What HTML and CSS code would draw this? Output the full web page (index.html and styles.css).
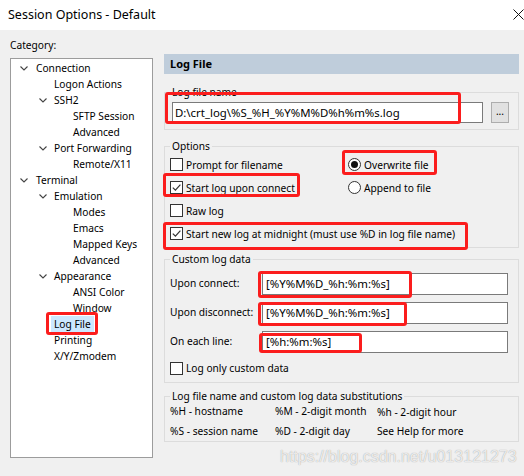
FILE: index.html
```html
<!DOCTYPE html>
<html>
<head>
<meta charset="utf-8">
<link rel="stylesheet" href="styles.css">
</head>
<body>
<div class="titlebar">
  <span class="title">Session Options - Default</span>
  <span class="close"><svg width="11" height="11" viewBox="0 0 11 11"><path d="M0.5 0.5 L10.5 10.5 M10.5 0.5 L0.5 10.5" stroke="#111" stroke-width="1" fill="none"/></svg></span>
</div>
<div class="main">
  <div class="left">
    <div class="cat-label">Category:</div>
    <div class="tree">
      <div class="node l0"><span class="chev"><svg width="8" height="5" viewBox="0 0 8 5"><path d="M0.5 0.5 L4 4 L7.5 0.5" stroke="#444" stroke-width="1.1" fill="none"/></svg></span>Connection</div>
      <div class="node l1">Logon Actions</div>
      <div class="node l1"><span class="chev"><svg width="8" height="5" viewBox="0 0 8 5"><path d="M0.5 0.5 L4 4 L7.5 0.5" stroke="#444" stroke-width="1.1" fill="none"/></svg></span>SSH2</div>
      <div class="node l2">SFTP Session</div>
      <div class="node l2">Advanced</div>
      <div class="node l1"><span class="chev"><svg width="8" height="5" viewBox="0 0 8 5"><path d="M0.5 0.5 L4 4 L7.5 0.5" stroke="#444" stroke-width="1.1" fill="none"/></svg></span>Port Forwarding</div>
      <div class="node l2">Remote/X11</div>
      <div class="node l0"><span class="chev"><svg width="8" height="5" viewBox="0 0 8 5"><path d="M0.5 0.5 L4 4 L7.5 0.5" stroke="#444" stroke-width="1.1" fill="none"/></svg></span>Terminal</div>
      <div class="node l1"><span class="chev"><svg width="8" height="5" viewBox="0 0 8 5"><path d="M0.5 0.5 L4 4 L7.5 0.5" stroke="#444" stroke-width="1.1" fill="none"/></svg></span>Emulation</div>
      <div class="node l2">Modes</div>
      <div class="node l2">Emacs</div>
      <div class="node l2">Mapped Keys</div>
      <div class="node l2">Advanced</div>
      <div class="node l1"><span class="chev"><svg width="8" height="5" viewBox="0 0 8 5"><path d="M0.5 0.5 L4 4 L7.5 0.5" stroke="#444" stroke-width="1.1" fill="none"/></svg></span>Appearance</div>
      <div class="node l2">ANSI Color</div>
      <div class="node l2">Window</div>
      <div class="node l1"><span class="selected">Log File</span></div>
      <div class="node l1">Printing</div>
      <div class="node l1">X/Y/Zmodem</div>
    </div>
  </div>
  <div class="right">
    <div class="header">Log File</div>

    <fieldset class="group g-name">
      <legend>Log file name</legend>
      <div class="name-row">
        <div class="input name-input">D:\crt_log\%S_%H_%Y%M%D%h%m%s.log</div>
        <div class="btn">...</div>
      </div>
    </fieldset>

    <fieldset class="group g-options">
      <legend>Options</legend>
      <div class="opt-grid">
        <label class="item"><span class="cb"></span>Prompt for filename</label>
        <label class="item"><span class="radio on"></span>Overwrite file</label>
        <label class="item"><span class="cb on"><svg width="11" height="11" viewBox="0 0 11 11"><path d="M1.8 5.6 L4.4 8.2 L9.4 2.6" stroke="#333" stroke-width="1.2" fill="none"/></svg></span>Start log upon connect</label>
        <label class="item"><span class="radio"></span>Append to file</label>
        <label class="item"><span class="cb"></span>Raw log</label>
        <span></span>
        <label class="item wide"><span class="cb on"><svg width="11" height="11" viewBox="0 0 11 11"><path d="M1.8 5.6 L4.4 8.2 L9.4 2.6" stroke="#333" stroke-width="1.2" fill="none"/></svg></span>Start new log at midnight (must use %D in log file name)</label>
      </div>
    </fieldset>

    <fieldset class="group g-custom">
      <legend>Custom log data</legend>
      <div class="custom-grid">
        <span class="lbl">Upon connect:</span>
        <div class="input">[%Y%M%D_%h:%m:%s]</div>
        <span class="lbl">Upon disconnect:</span>
        <div class="input">[%Y%M%D_%h:%m:%s]</div>
        <span class="lbl">On each line:</span>
        <div class="input">[%h:%m:%s]</div>
      </div>
      <label class="item only-custom"><span class="cb"></span>Log only custom data</label>
    </fieldset>

    <fieldset class="group g-subs">
      <legend>Log file name and custom log data substitutions</legend>
      <div class="subs-grid">
        <span>%H - hostname</span>
        <span>%M - 2-digit month</span>
        <span class="low">%h - 2-digit hour</span>
        <span>%S - session name</span>
        <span>%D - 2-digit day</span>
        <span>See Help for more</span>
      </div>
    </fieldset>
  </div>
</div>

<div class="marks">
  <div class="mark m-name"></div>
  <div class="mark m-over"></div>
  <div class="mark m-start"></div>
  <div class="mark m-mid"></div>
  <div class="mark m-conn"></div>
  <div class="mark m-disc"></div>
  <div class="mark m-line"></div>
  <div class="mark m-tree"></div>
</div>
<div class="watermark">https://blog.csdn.net/u013121273</div>
</body>
</html>
```

FILE: styles.css
```css
* { box-sizing: border-box; }
html, body { margin: 0; padding: 0; }
body {
  width: 524px;
  height: 476px;
  overflow: hidden;
  background: #f0f0f0;
  font-family: "Noto Sans", "Open Sans", sans-serif;
  font-size: 10.2px;
  color: #000;
  position: relative;
}

.titlebar {
  height: 30px;
  background: #fff;
  display: flex;
  align-items: center;
  justify-content: space-between;
  padding-left: 8px;
}
.title { font-size: 12.5px; line-height: 16px; margin-top: -1px; }
.close { display: flex; align-items: center; margin-right: 0; margin-top: -2px; }

.main { display: flex; }
.left { width: 164px; padding-left: 10px; }
.cat-label { height: 16px; line-height: 16px; margin-top: 7px; }
.tree {
  margin-top: 5px;
  width: 143px;
  height: 400px;
  background: #fff;
  border: 1px solid #9c9c9c;
  padding-top: 1px;
}
.node { height: 16px; line-height: 16px; white-space: nowrap; }
.node.l0 { padding-left: 25px; }
.node.l1 { padding-left: 43px; }
.node.l2 { padding-left: 62px; }
.chev {
  display: inline-flex;
  align-items: center;
  width: 16px;
  height: 16px;
  margin-left: -16px;
  vertical-align: top;
  padding-top: 1px;
}
.l1 .chev { margin-left: -15px; width: 15px; }
.selected {
  display: inline-block;
  background: #cce8ff;
  margin-left: -3px;
  padding: 0 3px;
  height: 17px;
}

.right { width: 355px; padding-top: 24px; }
.header {
  height: 20px;
  line-height: 20px;
  background: #bfcddb;
  padding-left: 6px;
  font-weight: bold;
  font-size: 11px;
}

.group {
  margin: 0;
  border: 1px solid #dcdcdc;
  padding: 0 10px 0 5px;
  min-width: 0;
}
.group legend {
  padding: 0 2px;
  line-height: 14px;
  height: 14px;
}
.g-name { margin-top: 11px; }
.g-options { margin-top: 9px; }
.g-custom { margin-top: 4px; }
.g-subs { margin-top: 6px; }

.name-row { display: flex; padding: 3px 0 6px 2px; }
.input {
  background: #fff;
  border: 1px solid #7a7a7a;
  height: 22px;
  line-height: 20px;
  padding-left: 3px;
  white-space: nowrap;
  overflow: hidden;
  font-size: 11.4px;
}
.name-input { width: 311px; height: 21px; line-height: 19px; padding-left: 2px; }
.btn {
  width: 18px;
  height: 21px;
  margin-left: 8px;
  margin-right: -1px;
  background: #e1e1e1;
  border: 1px solid #adadad;
  text-align: center;
  line-height: 17px;
}

.opt-grid {
  display: grid;
  grid-template-columns: 178px 1fr;
  grid-auto-rows: 23px;
  align-items: center;
  padding-bottom: 2px;
}
.item { display: flex; align-items: center; gap: 3px; white-space: nowrap; }
.wide { grid-column: 1 / span 2; }
.cb {
  width: 13px;
  height: 13px;
  border: 1px solid #333;
  background: #fff;
  display: flex;
  align-items: center;
  justify-content: center;
  flex: none;
}
.radio {
  width: 13px;
  height: 13px;
  border: 1px solid #333;
  border-radius: 50%;
  background: #fff;
  display: flex;
  align-items: center;
  justify-content: center;
  flex: none;
}
.radio.on::after {
  content: "";
  width: 7px;
  height: 7px;
  border-radius: 50%;
  background: #111;
}

.custom-grid {
  display: grid;
  grid-template-columns: 92px 1fr;
  grid-auto-rows: 22px;
  row-gap: 7px;
  align-items: center;
  padding-top: 7px;
}
.lbl { margin-top: -2px; }
.only-custom { height: 16px; margin-top: 7px; margin-bottom: 6px; }

.subs-grid {
  display: grid;
  grid-template-columns: 105px 102px 1fr;
  grid-auto-rows: 16px;
  row-gap: 4px;
  line-height: 16px;
  padding-bottom: 2px;
  white-space: nowrap;
}
.low { position: relative; top: 1px; }

.marks { position: absolute; left: 0; top: 0; width: 0; height: 0; }
.mark {
  position: absolute;
  border: 3px solid #fb1d1d;
  border-radius: 3px;
}
.m-name { left: 165px; top: 92px; width: 296px; height: 32px; }
.m-over { left: 342px; top: 150px; width: 95px; height: 25px; }
.m-start { left: 163px; top: 173px; width: 137px; height: 24px; }
.m-mid { left: 163px; top: 222px; width: 305px; height: 28px; }
.m-conn { left: 258px; top: 271px; width: 154px; height: 27px; }
.m-disc { left: 258px; top: 302px; width: 149px; height: 24px; }
.m-line { left: 259px; top: 333px; width: 103px; height: 20px; }
.m-tree { left: 46px; top: 312px; width: 52px; height: 23px; }

.watermark {
  position: absolute;
  left: 280px;
  top: 447px;
  font-family: "Liberation Sans", Arial, sans-serif;
  font-size: 16px;
  line-height: 20px;
  color: rgba(255, 255, 255, 0.8);
  text-shadow: 0 0 1px rgba(0, 0, 0, 0.4);
  white-space: nowrap;
}
```
